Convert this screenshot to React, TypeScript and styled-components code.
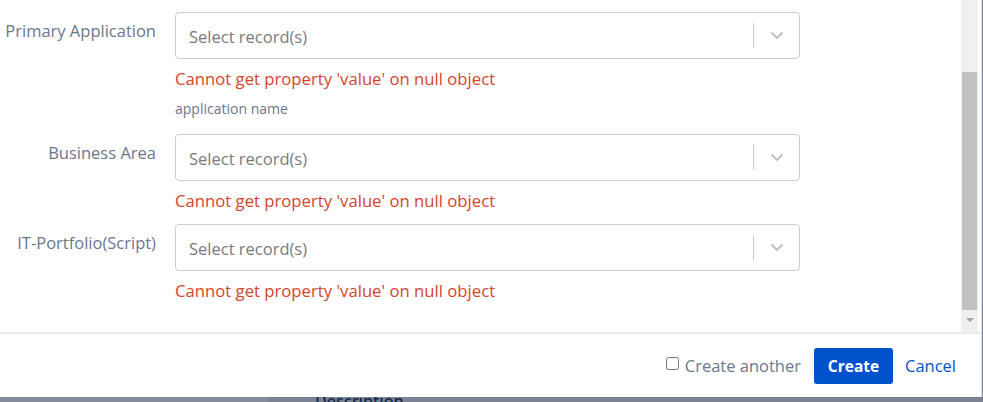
import React from "react";
import styled, { createGlobalStyle } from "styled-components";

const Global = createGlobalStyle`
  html, body { margin: 0; padding: 0; background: #7d8597; }
  body { font-family: "Open Sans", "Noto Sans", Arial, sans-serif; }
  * { box-sizing: border-box; }
`;

const Page = styled.div`
  width: 983px;
  height: 402px;
  display: flex;
  flex-direction: column;
  overflow: hidden;
`;

const Dialog = styled.div`
  width: 982px;
  height: 397px;
  background: #ffffff;
  border-right: 1px solid #e2e2e2;
  display: flex;
  flex-direction: column;
`;

const Body = styled.div`
  height: 332px;
  display: flex;
  flex-direction: row;
`;

const Content = styled.div`
  flex: 1;
  padding-top: 12px;
  display: flex;
  flex-direction: column;
  gap: 12px;
`;

const ScrollTrack = styled.div`
  width: 17px;
  margin-right: 3px;
  background: #f0f0f0;
  display: flex;
  flex-direction: column;
  align-items: center;
`;

const ScrollThumb = styled.div`
  margin-top: 72px;
  width: 15px;
  height: 238px;
  background: #c1c1c1;
`;

const ScrollArrow = styled.div`
  margin-top: 8px;
  width: 0;
  height: 0;
  border-left: 4px solid transparent;
  border-right: 4px solid transparent;
  border-top: 4px solid #a3a3a3;
`;

const Field = styled.div<{ $extra?: number }>`
  display: grid;
  grid-template-columns: 156px 625px;
  column-gap: 19px;
  padding-bottom: ${(p) => p.$extra ?? 0}px;
`;

const Label = styled.label`
  text-align: right;
  color: #6b778c;
  font-size: 16.5px;
  line-height: 22px;
  padding-top: 8px;
  white-space: nowrap;
`;

const Control = styled.div`
  display: flex;
  flex-direction: column;
`;

const Select = styled.div`
  height: 47px;
  border: 1px solid #cccccc;
  border-radius: 4px;
  display: flex;
  align-items: center;
  background: #fff;
`;

const Placeholder = styled.span`
  flex: 1;
  padding-left: 13px;
  padding-top: 1px;
  color: #7a7a7a;
  font-size: 16.5px;
`;

const Separator = styled.span`
  width: 1px;
  align-self: stretch;
  margin: 10px 0;
  background: #cccccc;
`;

const Chevron = styled.span`
  width: 45px;
  display: flex;
  justify-content: center;
  align-items: center;
  color: #bdbdbd;
`;

const ErrorText = styled.div`
  margin-top: 9px;
  color: #d5452a;
  font-size: 16.7px;
  line-height: 22px;
  white-space: nowrap;
`;

const Hint = styled.div`
  margin-top: 10px;
  color: #6b778c;
  font-size: 14px;
  line-height: 18px;
`;

const Footer = styled.div`
  flex: 1;
  border-top: 2px solid #ebebeb;
  display: flex;
  align-items: center;
  justify-content: flex-end;
  padding-right: 25px;
`;

const CheckLabel = styled.label`
  display: flex;
  align-items: center;
  gap: 6px;
  color: #6b778c;
  font-size: 16.5px;
  margin-right: 13px;
`;

const Check = styled.input`
  margin: 0;
  width: 13px;
  height: 13px;
  position: relative;
  top: -2px;
`;

const PrimaryButton = styled.button`
  height: 36px;
  width: 79px;
  border: none;
  border-radius: 3px;
  background: #0052cc;
  color: #fff;
  font-family: inherit;
  font-size: 15.5px;
  font-weight: 700;
  padding: 0;
  margin-right: 12px;
`;

const LinkButton = styled.a`
  color: #0052cc;
  font-size: 16.5px;
  text-decoration: none;
`;

const Backdrop = styled.div`
  flex: 1;
  display: flex;
  overflow: hidden;
`;

const BackdropLeft = styled.div`
  width: 268px;
  background: #838a9b;
`;

const BackdropRight = styled.div`
  flex: 1;
  background: #7a8294;
  padding-left: 47px;
`;

const UnderText = styled.div`
  margin-top: -4px;
  font-size: 16px;
  line-height: 16px;
  font-weight: 600;
  color: #172b4d;
`;

const ChevronIcon = () => (
  <svg width="14" height="9" viewBox="0 0 14 9" fill="none">
    <path d="M1.5 1.5 L7 7 L12.5 1.5" stroke="currentColor" strokeWidth="1.8" />
  </svg>
);

const RecordSelect = () => (
  <Select>
    <Placeholder>Select record(s)</Placeholder>
    <Separator />
    <Chevron>
      <ChevronIcon />
    </Chevron>
  </Select>
);

const ERR = "Cannot get property 'value' on null object";

export default function App() {
  return (
    <Page>
      <Global />
      <Dialog>
        <Body>
          <Content>
            <Field $extra={4}>
              <Label>Primary Application</Label>
              <Control>
                <RecordSelect />
                <ErrorText>{ERR}</ErrorText>
                <Hint>application name</Hint>
              </Control>
            </Field>
            <Field>
              <Label>Business Area</Label>
              <Control>
                <RecordSelect />
                <ErrorText>{ERR}</ErrorText>
              </Control>
            </Field>
            <Field>
              <Label>IT-Portfolio(Script)</Label>
              <Control>
                <RecordSelect />
                <ErrorText>{ERR}</ErrorText>
              </Control>
            </Field>
          </Content>
          <ScrollTrack>
            <ScrollThumb />
            <ScrollArrow />
          </ScrollTrack>
        </Body>
        <Footer>
          <CheckLabel>
            <Check type="checkbox" />
            Create another
          </CheckLabel>
          <PrimaryButton>Create</PrimaryButton>
          <LinkButton href="#">Cancel</LinkButton>
        </Footer>
      </Dialog>
      <Backdrop>
        <BackdropLeft />
        <BackdropRight>
          <UnderText>Description</UnderText>
        </BackdropRight>
      </Backdrop>
    </Page>
  );
}
